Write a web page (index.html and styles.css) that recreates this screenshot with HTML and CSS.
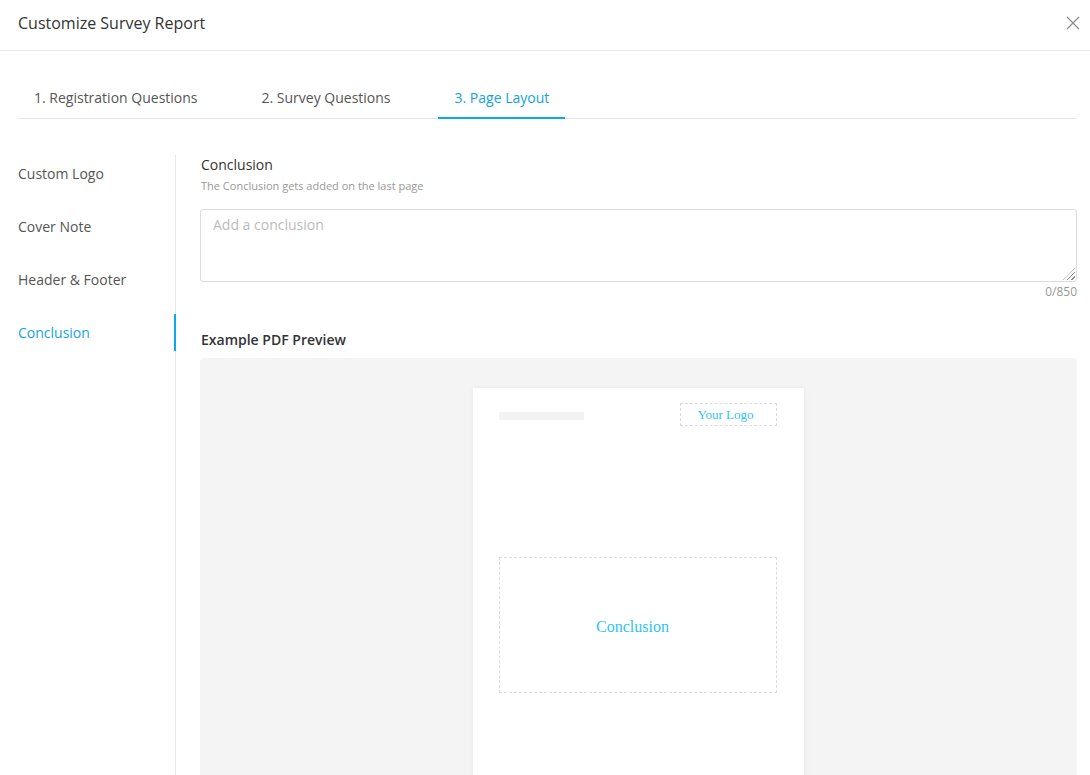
FILE: index.html
```html
<!DOCTYPE html>
<html lang="en">
<head>
<meta charset="utf-8">
<title>Customize Survey Report</title>
<link rel="stylesheet" href="styles.css">
</head>
<body>
<div class="modal">
  <header class="modal-header">
    <h1 class="modal-title">Customize Survey Report</h1>
    <button class="close-btn" aria-label="Close">
      <svg width="14" height="14" viewBox="0 0 14 14"><path d="M1 1 L13 13 M13 1 L1 13" stroke="#8c8c8c" stroke-width="1.3" fill="none"/></svg>
    </button>
  </header>

  <nav class="tabs">
    <div class="tab">1. Registration Questions</div>
    <div class="tab">2. Survey Questions</div>
    <div class="tab active">3. Page Layout</div>
  </nav>

  <div class="main">
    <aside class="sidebar">
      <div class="side-item">Custom Logo</div>
      <div class="side-item">Cover Note</div>
      <div class="side-item">Header &amp; Footer</div>
      <div class="side-item active">Conclusion</div>
    </aside>

    <section class="content">
      <div class="field-title">Conclusion</div>
      <div class="field-hint">The Conclusion gets added on the last page</div>
      <div class="input-wrap">
        <textarea class="conclusion-input" placeholder="Add a conclusion"></textarea>
        <span class="resize-grip"></span>
      </div>
      <div class="counter">0/850</div>

      <div class="preview-title">Example PDF Preview</div>
      <div class="preview">
        <div class="pdf-page">
          <div class="pdf-head">
            <div class="pdf-bar"></div>
            <div class="pdf-logo">Your Logo</div>
          </div>
          <div class="pdf-conclusion">Conclusion</div>
        </div>
      </div>
    </section>
  </div>
</div>
</body>
</html>
```

FILE: styles.css
```css
* { box-sizing: border-box; }

html, body {
  margin: 0;
  padding: 0;
  background: #fff;
  font-family: "Open Sans", "Noto Sans", sans-serif;
  color: #333;
  overflow: hidden;
}

.modal {
  width: 1090px;
  height: 775px;
  overflow: hidden;
  display: flex;
  flex-direction: column;
}

.modal-header {
  flex-shrink: 0;
  height: 51px;
  border-bottom: 1px solid #e8e8e8;
  display: flex;
  align-items: center;
  justify-content: space-between;
  padding: 0 10px 0 18px;
}

.modal-title {
  margin: 0;
  font-size: 16px;
  font-weight: 400;
  color: #333;
  line-height: 22px;
  margin-top: -5px;
}

.close-btn {
  border: 0;
  background: none;
  padding: 0;
  width: 14px;
  height: 14px;
  margin-top: -4px;
  display: flex;
}

.tabs {
  flex-shrink: 0;
  display: flex;
  gap: 31px;
  margin: 29px 13px 0 17px;
  border-bottom: 1px solid #e8e8e8;
  height: 39px;
}

.tab {
  padding: 0 16px 0 17px;
  font-size: 14px;
  color: #555;
  line-height: 36px;
  height: 39px;
  border-bottom: 2px solid transparent;
}

.tab.active {
  color: #13a3e6;
  border-bottom: 2px solid #09a8f2;
}

.main {
  display: flex;
  margin-top: 36px;
  flex: 1;
  min-height: 0;
}

.sidebar {
  width: 176px;
  border-right: 1px solid #e8e8e8;
  display: flex;
  flex-direction: column;
  gap: 16px;
  flex-shrink: 0;
}

.side-item {
  height: 37px;
  line-height: 37px;
  padding-left: 18px;
  font-size: 14px;
  color: #555;
  margin-right: -1px;
  border-right: 2px solid transparent;
}

.side-item.active {
  color: #13a3e6;
  border-right: 2px solid #09a8f2;
}

.content {
  flex: 1;
  padding: 0 13px 0 24px;
  display: flex;
  flex-direction: column;
  min-height: 0;
}

.content > * {
  flex-shrink: 0;
}

.field-title {
  font-size: 14px;
  line-height: 20px;
  color: #333;
  padding-left: 1px;
}

.field-hint {
  font-size: 11px;
  line-height: 16px;
  color: #999;
  margin-top: 3px;
  padding-left: 1px;
}

.input-wrap {
  position: relative;
  margin-top: 15px;
}

.conclusion-input {
  display: block;
  height: 73px;
  width: 100%;
  border: 1px solid #dcdcdc;
  border-radius: 3px;
  padding: 5px 12px;
  font-family: "Open Sans", "Noto Sans", sans-serif;
  font-size: 14px;
  line-height: 20px;
  color: #333;
  resize: none;
  outline: none;
}

.conclusion-input::placeholder {
  color: #bbb;
}

.resize-grip {
  position: absolute;
  right: 2px;
  bottom: 2px;
  width: 12px;
  height: 12px;
  background: repeating-linear-gradient(135deg, transparent 0 2px, #8a8a8a 2px 3px);
  clip-path: polygon(100% 0, 100% 100%, 0 100%);
  pointer-events: none;
}

.counter {
  text-align: right;
  font-size: 12px;
  line-height: 16px;
  color: #999;
  margin-top: 2px;
}

.preview-title {
  margin-top: 30px;
  font-size: 14px;
  font-weight: 600;
  line-height: 20px;
  color: #333;
  padding-left: 1px;
}

.preview {
  margin-top: 8px;
  background: #f4f4f4;
  border-radius: 4px;
  height: 460px;
  padding-top: 30px;
  display: flex;
  justify-content: center;
}

.pdf-page {
  width: 331px;
  height: 440px;
  background: #fff;
  box-shadow: 0 0 6px rgba(0, 0, 0, 0.06);
  padding: 15px 27px 0 26px;
}

.pdf-head {
  display: flex;
  justify-content: space-between;
  align-items: center;
}

.pdf-bar {
  width: 85px;
  height: 8px;
  background: #f2f2f2;
  margin-top: 3px;
}

.pdf-logo {
  width: 97px;
  height: 23px;
  border: 1px dashed #dcdcdc;
  font-family: "Liberation Serif", "Times New Roman", serif;
  font-size: 13px;
  line-height: 21px;
  color: #2fc4f5;
  text-align: center;
  padding-right: 6px;
}

.pdf-conclusion {
  margin-top: 131px;
  height: 136px;
  border: 1px dashed #dcdcdc;
  display: flex;
  align-items: center;
  justify-content: center;
  font-family: "Liberation Serif", "Times New Roman", serif;
  font-size: 16px;
  color: #2fc4f5;
  padding: 3px 11px 0 0;
}
```
